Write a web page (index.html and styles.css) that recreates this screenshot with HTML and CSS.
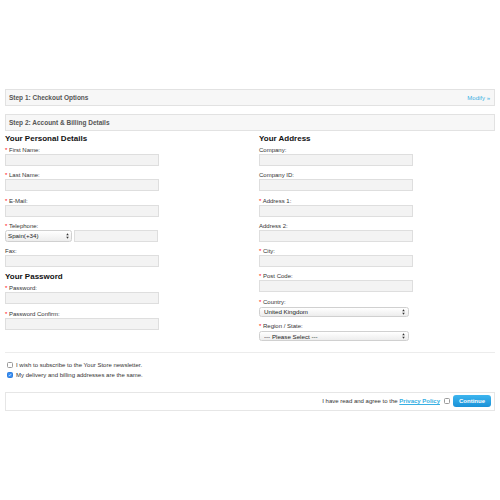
FILE: index.html
```html
<!DOCTYPE html>
<html>
<head>
<meta charset="utf-8">
<link rel="stylesheet" href="styles.css">
</head>
<body>
<div class="page">
  <div class="step">
    <span class="step-title">Step 1: Checkout Options</span>
    <a class="modify" href="#">Modify &raquo;</a>
  </div>
  <div class="step step-last">
    <span class="step-title">Step 2: Account &amp; Billing Details</span>
  </div>

  <div class="cols">
    <div class="col">
      <h2 class="heading">Your Personal Details</h2>
      <div class="field"><span class="field-label"><span class="req">*</span> First Name:</span><input class="input" type="text"></div>
      <div class="field"><span class="field-label"><span class="req">*</span> Last Name:</span><input class="input" type="text"></div>
      <div class="field"><span class="field-label"><span class="req">*</span> E-Mail:</span><input class="input" type="text"></div>
      <div class="field"><span class="field-label"><span class="req">*</span> Telephone:</span>
        <div class="tel-row">
          <div class="select-wrap tel">
            <select class="select"><option>Spain(+34)</option></select>
            <svg class="arrow" viewBox="0 0 3 6"><path d="M1.5 0.3 L2.8 2.3 L0.2 2.3 Z M1.5 5.7 L2.8 3.7 L0.2 3.7 Z" fill="#333"/></svg>
          </div>
          <input class="input tel-input" type="text">
        </div>
      </div>
      <div class="field"><span class="field-label">Fax:</span><input class="input" type="text"></div>
      <h2 class="heading">Your Password</h2>
      <div class="field"><span class="field-label"><span class="req">*</span> Password:</span><input class="input" type="password"></div>
      <div class="field"><span class="field-label"><span class="req">*</span> Password Confirm:</span><input class="input" type="password"></div>
    </div>
    <div class="col">
      <h2 class="heading">Your Address</h2>
      <div class="field"><span class="field-label">Company:</span><input class="input" type="text"></div>
      <div class="field"><span class="field-label">Company ID:</span><input class="input" type="text"></div>
      <div class="field"><span class="field-label"><span class="req">*</span> Address 1:</span><input class="input" type="text"></div>
      <div class="field"><span class="field-label">Address 2:</span><input class="input" type="text"></div>
      <div class="field"><span class="field-label"><span class="req">*</span> City:</span><input class="input" type="text"></div>
      <div class="field"><span class="field-label"><span class="req">*</span> Post Code:</span><input class="input" type="text"></div>
      <div class="field"><span class="field-label"><span class="req">*</span> Country:</span>
        <div class="select-wrap">
          <select class="select"><option>United Kingdom</option></select>
          <svg class="arrow" viewBox="0 0 3 6"><path d="M1.5 0.3 L2.8 2.3 L0.2 2.3 Z M1.5 5.7 L2.8 3.7 L0.2 3.7 Z" fill="#333"/></svg>
        </div>
      </div>
      <div class="field"><span class="field-label"><span class="req">*</span> Region / State:</span>
        <div class="select-wrap">
          <select class="select"><option>--- Please Select ---</option></select>
          <svg class="arrow" viewBox="0 0 3 6"><path d="M1.5 0.3 L2.8 2.3 L0.2 2.3 Z M1.5 5.7 L2.8 3.7 L0.2 3.7 Z" fill="#333"/></svg>
        </div>
      </div>
    </div>
  </div>

  <div class="sep"></div>

  <div class="checks">
    <div class="check"><span class="cb"></span><span>I wish to subscribe to the Your Store newsletter.</span></div>
    <div class="check"><span class="cb cb-on"><svg viewBox="0 0 6 6"><path d="M1.3 3.1 L2.5 4.3 L4.7 1.6" fill="none" stroke="#fff" stroke-width="1"/></svg></span><span>My delivery and billing addresses are the same.</span></div>
  </div>

  <div class="buttons">
    <span class="agree">I have read and agree to the <a class="privacy" href="#">Privacy Policy</a></span>
    <span class="cb cb-agree"></span>
    <span class="btn">Continue</span>
  </div>
</div>
</body>
</html>
```

FILE: styles.css
```css
* {
  box-sizing: border-box;
}

body {
  margin: 0;
  background: #fff;
  color: #333;
  font-family: "Liberation Sans", Arial, sans-serif;
}

.page {
  padding: 89px 5px 0;
}

.step {
  height: 17px;
  border: 1px solid #e2e2e2;
  background: #f7f7f7;
  display: flex;
  align-items: center;
  justify-content: space-between;
  padding: 0 4px 0 3px;
  margin-bottom: 8px;
}

.step-last {
  margin-bottom: 3px;
}

.step-title {
  font-size: 6.5px;
  font-weight: bold;
  color: #555;
}

.modify {
  font-size: 6px;
  color: #38b0e3;
  text-decoration: none;
}

.cols {
  display: grid;
  grid-template-columns: 254px 1fr;
}

.heading {
  margin: 0 0 2px;
  font-size: 8px;
  line-height: 10px;
  font-weight: bold;
  color: #111;
}

.field {
  margin-bottom: 5.3px;
}

.field-label {
  display: block;
  height: 8px;
  font-size: 6px;
  line-height: 8px;
  color: #333;
}

.req {
  color: #f00;
}

.input {
  display: block;
  width: 154px;
  height: 12px;
  margin: 0;
  padding: 0;
  border: 1px solid #dedede;
  background: #f3f3f3;
  font-size: 6px;
  outline: none;
}

.tel-row {
  display: flex;
  gap: 2px;
}

.tel-input {
  width: 84px;
}

.select-wrap {
  position: relative;
  width: 150px;
  height: 10px;
  margin: 1px 0;
}

.select-wrap.tel {
  width: 67px;
  height: 12px;
  margin: 0;
}

.select {
  appearance: none;
  -webkit-appearance: none;
  display: block;
  width: 100%;
  height: 100%;
  margin: 0;
  padding: 0 0 0 4px;
  border: 1px solid #d0d0d0;
  border-radius: 2.5px;
  background: linear-gradient(#ffffff, #ededed);
  font-family: "Liberation Sans", Arial, sans-serif;
  font-size: 6.2px;
  color: #222;
  outline: none;
}

.select-wrap.tel .select {
  padding-left: 2px;
}

.arrow {
  position: absolute;
  right: 4px;
  top: 50%;
  width: 3px;
  height: 6px;
  transform: translateY(-50%);
  pointer-events: none;
}

.select-wrap.tel .arrow {
  right: 3px;
}

.sep {
  margin-top: 5.6px;
  height: 0;
  border-top: 1px solid #ececec;
}

.checks {
  margin-top: 7px;
}

.check {
  display: flex;
  align-items: center;
  gap: 3px;
  height: 10px;
  padding-left: 2px;
  font-size: 6px;
  color: #333;
}

.cb {
  display: inline-block;
  flex: none;
  width: 6px;
  height: 6px;
  border: 0.7px solid #9a9a9a;
  border-radius: 1.5px;
  background: #fff;
}

.cb svg {
  display: block;
  width: 100%;
  height: 100%;
}

.cb-on {
  border-color: #2f7fe0;
  background: #3a8ff2;
}

.buttons {
  margin-top: 12px;
  height: 19px;
  border: 1px solid #e6e6e6;
  display: flex;
  align-items: center;
  justify-content: flex-end;
  padding-right: 3px;
  font-size: 6px;
  color: #333;
}

.privacy {
  font-weight: bold;
  color: #38b0e3;
  text-decoration: underline;
}

.cb-agree {
  margin: 0 3px 0 4px;
}

.btn {
  display: flex;
  align-items: center;
  justify-content: center;
  width: 38px;
  height: 12px;
  border-radius: 3px;
  background: linear-gradient(#3db5ef, #1a91d7);
  color: #fff;
  font-size: 6px;
  font-weight: bold;
}
```
